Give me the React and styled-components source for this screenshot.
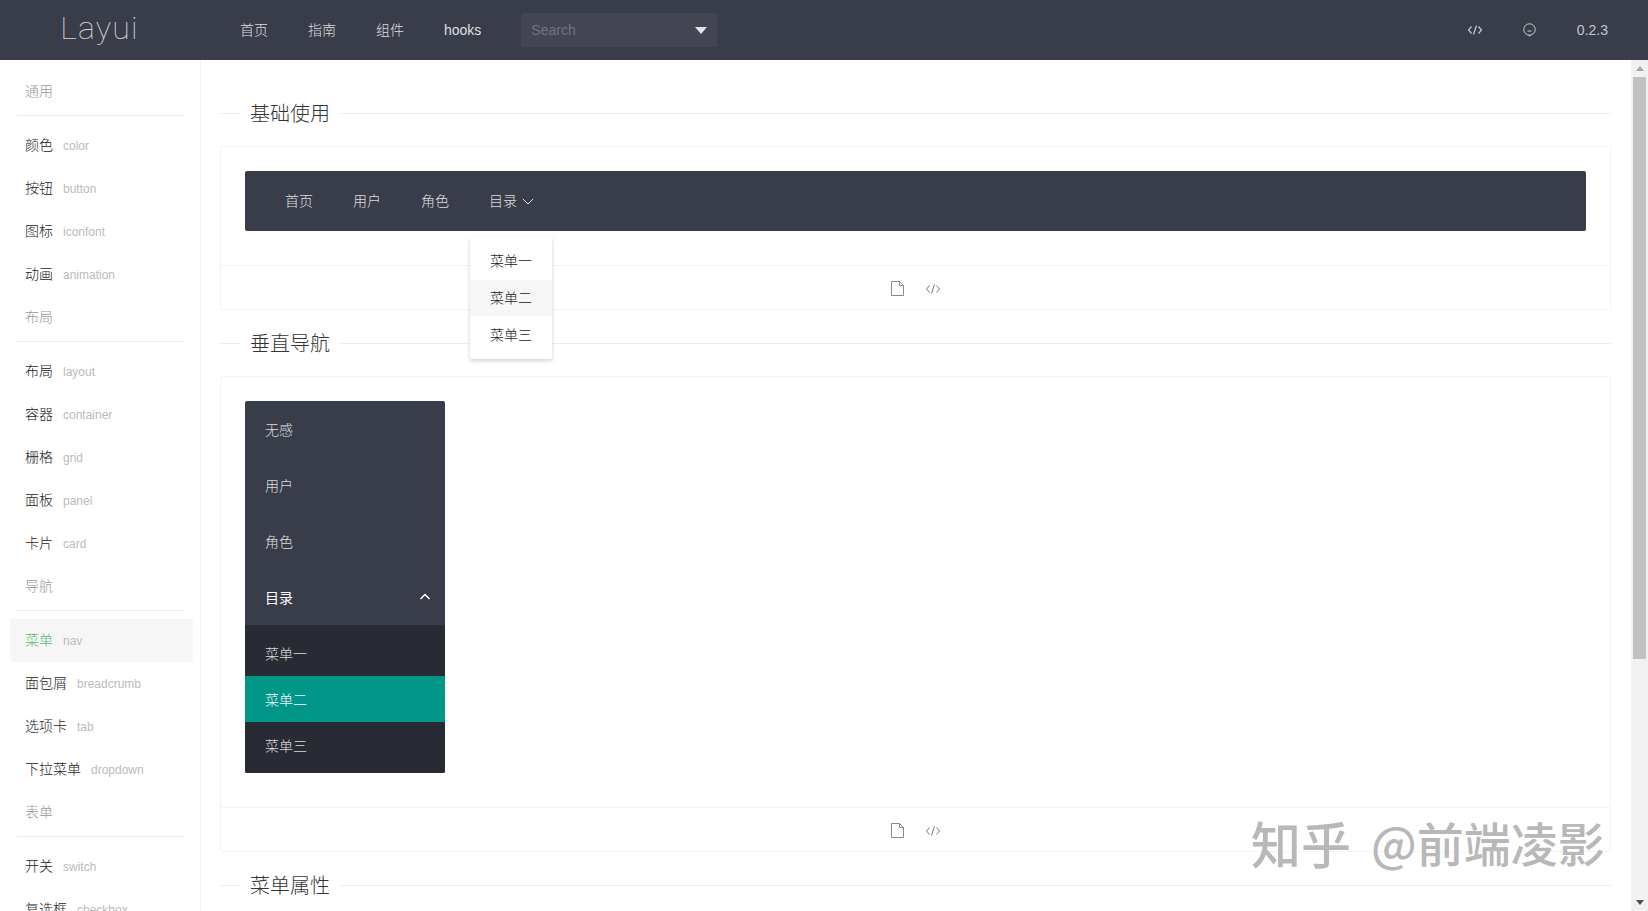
import React from 'react';
import styled, { createGlobalStyle } from 'styled-components';

const FONT = `"Liberation Sans", "Noto Sans CJK SC", sans-serif`;

const Global = createGlobalStyle`
  html, body { margin: 0; height: 100%; overflow: hidden; background: #fff; }
  body { font-family: ${FONT}; font-size: 14px; font-weight: 300; color: #222; }
  #root { height: 100%; }
  * { box-sizing: border-box; }
`;

const Page = styled.div`
  height: 100vh;
  display: flex;
  flex-direction: column;
  position: relative;
`;

const Header = styled.header`
  height: 60px;
  flex: none;
  display: flex;
  align-items: center;
  background: #393d49;
  color: rgba(255, 255, 255, 0.7);
`;

const Logo = styled.div`
  width: 200px;
  height: 60px;
  display: flex;
  align-items: center;
  justify-content: center;
  font-family: Roboto, sans-serif;
  font-weight: 100;
  font-size: 32px;
  letter-spacing: 1.2px;
  color: rgba(255, 255, 255, 0.8);
  border-right: 1px solid rgba(255, 255, 255, 0.02);
  padding-bottom: 4px;
`;

const TopNav = styled.nav`
  display: flex;
  padding-left: 20px;
`;

const TopLink = styled.a`
  padding: 0 20px;
  line-height: 60px;
  color: rgba(255, 255, 255, 0.85);
  font-size: 14px;
`;

const SearchBox = styled.div`
  width: 196px;
  height: 34px;
  margin-left: 20px;
  padding: 0 10px;
  display: flex;
  align-items: center;
  justify-content: space-between;
  background: rgba(255, 255, 255, 0.05);
  border-radius: 2px;
  font-size: 14px;
  color: rgba(255, 255, 255, 0.26);
`;

const HeaderRight = styled.div`
  margin-left: auto;
  display: flex;
  align-items: center;
  padding-right: 40px;
`;

const HeaderIcon = styled.span`
  display: inline-flex;
  margin-right: ${p => p.$gap}px;
  color: rgba(255, 255, 255, 0.72);
`;

const Version = styled.span`
  font-size: 14px;
  color: rgba(255, 255, 255, 0.72);
`;

const Body = styled.div`
  flex: 1;
  min-height: 0;
  display: flex;
`;

const Sidebar = styled.aside`
  width: 201px;
  flex: none;
  padding: 10px 7px 0 10px;
  overflow: hidden;
  border-right: 1px solid #f3f3f3;
`;

const GroupTitle = styled.div`
  height: 54px;
  padding: 0 8px 0 7px;
  color: #999;
  font-size: 14px;
`;

const GroupText = styled.div`
  height: 46px;
  line-height: 42px;
  padding-left: 8px;
  border-bottom: 1px solid #ececec;
`;

const SideItem = styled.div`
  height: 43px;
  display: flex;
  align-items: center;
  gap: 10px;
  padding-left: 15px;
  border-radius: 2px;
  background: ${p => (p.$active ? '#f6f6f6' : 'transparent')};
  color: ${p => (p.$active ? '#5fb878' : '#222')};
`;

const SideZh = styled.span`
  padding-bottom: 3px;
`;

const SideEn = styled.span`
  font-size: 12px;
  color: #bbb;
`;

const Main = styled.main`
  flex: 1;
  min-width: 0;
  overflow: hidden;
  padding: 38px 20px 0 19px;
  display: flex;
  flex-direction: column;
  gap: 18px;
`;

const ScrollRail = styled.div`
  width: 17px;
  flex: none;
  display: flex;
  flex-direction: column;
  background: #f1f1f1;
`;

const ScrollButton = styled.div`
  height: 17px;
  flex: none;
  display: flex;
  align-items: center;
  justify-content: center;
  &::before {
    content: '';
    border-left: 4.5px solid transparent;
    border-right: 4.5px solid transparent;
    ${p => (p.$down ? 'border-top: 5px solid #505050;' : 'border-bottom: 5px solid #a3a3a3;')}
  }
`;

const ScrollThumb = styled.div`
  height: 582px;
  flex: none;
  margin: 0 2px;
  background: #c1c1c1;
`;

const ScrollTrack = styled.div`
  flex: 1;
`;

const Legend = styled.div`
  height: 30px;
  flex: none;
  display: flex;
  align-items: center;
  font-size: 20px;
  font-weight: 300;
  color: #333;
  &::before { content: ''; width: 20px; height: 1px; background: #eee; }
  &::after { content: ''; flex: 1; height: 1px; background: #eee; }
`;

const LegendText = styled.span`
  padding: 0 10px 2px;
`;

const Card = styled.section`
  flex: none;
  border: 1px solid #f3f3f3;
  border-radius: 2px;
`;

const CardBody = styled.div`
  padding: 24px 24px 34px;
`;

const CardFooter = styled.div`
  height: 44px;
  border-top: 1px solid #f3f3f3;
  display: flex;
  align-items: center;
  justify-content: center;
  gap: 21px;
  padding-top: 2px;
`;

const HNav = styled.nav`
  height: 60px;
  padding-left: 20px;
  display: flex;
  align-items: center;
  background: #393d49;
  border-radius: 2px;
`;

const HItem = styled.div`
  position: relative;
  padding: 0 20px;
  line-height: 60px;
  display: flex;
  align-items: center;
  gap: 5px;
  color: rgba(255, 255, 255, 0.85);
`;

const Dropdown = styled.div`
  position: absolute;
  top: 66px;
  left: 1px;
  width: 82px;
  height: 122px;
  padding: 6px 0;
  display: flex;
  flex-direction: column;
  background: #fff;
  border-radius: 2px;
  box-shadow: 0 2px 4px rgba(0, 0, 0, 0.18);
  z-index: 5;
`;

const DropItem = styled.div`
  flex: 1;
  display: flex;
  align-items: center;
  justify-content: center;
  line-height: 1;
  color: #222;
  background: ${p => (p.$hover ? '#f6f6f6' : '#fff')};
`;

const VNav = styled.nav`
  width: 200px;
  background: #393d49;
  border-radius: 2px;
  overflow: hidden;
`;

const VItem = styled.div`
  height: 56px;
  padding: 0 14px 1px 20px;
  display: flex;
  align-items: center;
  justify-content: space-between;
  font-weight: ${p => (p.$open ? 400 : 300)};
  color: ${p => (p.$open ? '#fff' : 'rgba(255,255,255,.85)')};
`;

const VSub = styled.div`
  padding: 5px 0;
  background: #282b33;
`;

const VSubItem = styled.div`
  height: 46px;
  padding: 0 20px;
  display: flex;
  align-items: center;
  color: ${p => (p.$active ? '#fff' : 'rgba(255,255,255,.85)')};
  background: ${p => (p.$active ? '#009688' : 'transparent')};
`;

const Watermark = styled.div`
  position: absolute;
  left: 1251px;
  top: 814px;
  display: flex;
  align-items: center;
  font-family: "Noto Sans CJK SC", sans-serif;
  font-size: 47px;
  font-weight: 500;
  line-height: 56px;
  white-space: nowrap;
  color: #b8b8b8;
  text-shadow: 1px 0 0 rgba(255, 255, 255, 0.9);
  pointer-events: none;
  z-index: 10;
`;

const WaterBrand = styled.span`
  font-size: 50px;
  margin-right: 20px;
`;

const CodeIcon = ({ c = 'currentColor', sw = 1.2 }) => (
  <svg width="16" height="10" viewBox="0 0 15 10" fill="none" stroke={c} strokeWidth={sw}>
    <path d="M4 1.5 1 5l3 3.5M11 1.5 14 5l-3 3.5M9 .5 6 9.5" />
  </svg>
);

const Smile = () => (
  <svg width="13" height="14" viewBox="0 0 13 14" fill="none" stroke="currentColor" strokeWidth="1">
    <circle cx="6.5" cy="6.5" r="5.7" />
    <path d="M4.5 8h4M5.5 12.3 6.5 13l1-.7" />
  </svg>
);

const FileIcon = () => (
  <svg width="13" height="15" viewBox="0 0 13 15" fill="none" stroke="#8a8a8a" strokeWidth="1">
    <path d="M.5.5h8l4 4v10H.5zM8.5.5v4h4" />
  </svg>
);

const Caret = () => (
  <svg width="12" height="7" viewBox="0 0 12 7"><path d="M0 0h12L6 7z" fill="rgba(255,255,255,.85)" /></svg>
);

const ChevronDown = () => (
  <svg width="12" height="7" viewBox="0 0 12 7" fill="none" stroke="currentColor" strokeWidth="1"><path d="M.8.8 6 6 11.2.8" /></svg>
);

const ChevronUp = () => (
  <svg width="12" height="7" viewBox="0 0 12 7" fill="none" stroke="#fff" strokeWidth="1.5"><path d="M1.5 6 6 1.5 10.5 6" /></svg>
);

const groups = [
  ['通用', [['颜色', 'color'], ['按钮', 'button'], ['图标', 'iconfont'], ['动画', 'animation']]],
  ['布局', [['布局', 'layout'], ['容器', 'container'], ['栅格', 'grid'], ['面板', 'panel'], ['卡片', 'card']]],
  ['导航', [['菜单', 'nav'], ['面包屑', 'breadcrumb'], ['选项卡', 'tab'], ['下拉菜单', 'dropdown']]],
  ['表单', [['开关', 'switch'], ['复选框', 'checkbox']]],
];

const Footer = () => (
  <CardFooter>
    <FileIcon />
    <CodeIcon c="#777" sw={1} />
  </CardFooter>
);

export default function App() {
  return (
    <Page>
      <Global />
      <Header>
        <Logo>Layui</Logo>
        <TopNav>
          {['首页', '指南', '组件', 'hooks'].map(t => <TopLink key={t}>{t}</TopLink>)}
        </TopNav>
        <SearchBox>
          <span>Search</span>
          <Caret />
        </SearchBox>
        <HeaderRight>
          <HeaderIcon $gap={40}><CodeIcon /></HeaderIcon>
          <HeaderIcon $gap={41}><Smile /></HeaderIcon>
          <Version>0.2.3</Version>
        </HeaderRight>
      </Header>
      <Body>
        <Sidebar>
          {groups.map(([title, items]) => (
            <div key={title}>
              <GroupTitle><GroupText>{title}</GroupText></GroupTitle>
              {items.map(([zh, en]) => (
                <SideItem key={en} $active={en === 'nav'}>
                  <SideZh>{zh}</SideZh>
                  <SideEn>{en}</SideEn>
                </SideItem>
              ))}
            </div>
          ))}
        </Sidebar>
        <Main>
          <Legend><LegendText>基础使用</LegendText></Legend>
          <Card>
            <CardBody>
              <HNav>
                <HItem>首页</HItem>
                <HItem>用户</HItem>
                <HItem>角色</HItem>
                <HItem>
                  目录 <ChevronDown />
                  <Dropdown>
                    <DropItem>菜单一</DropItem>
                    <DropItem $hover>菜单二</DropItem>
                    <DropItem>菜单三</DropItem>
                  </Dropdown>
                </HItem>
              </HNav>
            </CardBody>
            <Footer />
          </Card>
          <Legend><LegendText>垂直导航</LegendText></Legend>
          <Card>
            <CardBody>
              <VNav>
                <VItem>无感</VItem>
                <VItem>用户</VItem>
                <VItem>角色</VItem>
                <VItem $open>目录 <ChevronUp /></VItem>
                <VSub>
                  <VSubItem>菜单一</VSubItem>
                  <VSubItem $active>菜单二</VSubItem>
                  <VSubItem>菜单三</VSubItem>
                </VSub>
              </VNav>
            </CardBody>
            <Footer />
          </Card>
          <Legend><LegendText>菜单属性</LegendText></Legend>
        </Main>
        <ScrollRail>
          <ScrollButton />
          <ScrollThumb />
          <ScrollTrack />
          <ScrollButton $down />
        </ScrollRail>
      </Body>
      <Watermark><WaterBrand>知乎</WaterBrand>@前端凌影</Watermark>
    </Page>
  );
}
